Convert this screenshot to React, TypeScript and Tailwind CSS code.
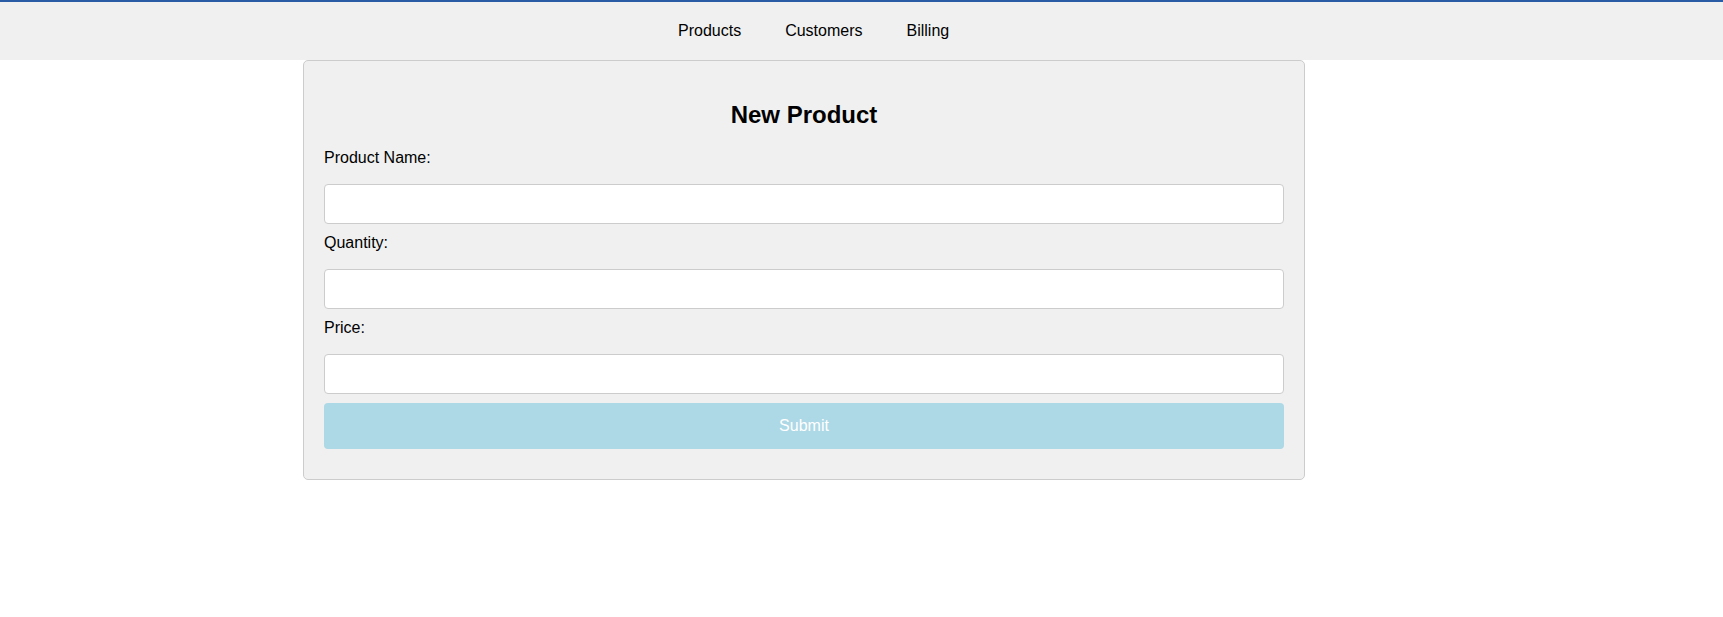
import React from "react";

export default function App() {
  const fields = ["Product Name:", "Quantity:", "Price:"];
  return (
    <div
      className="min-h-[617px] w-full bg-white text-black"
      style={{ fontFamily: '"Liberation Sans", Arial, sans-serif' }}
    >
      <nav className="h-[60px] border-t-2 border-[#2a5ca6] bg-[#f0f0f0]">
        <ul className="flex pl-[656px] pt-[20px]">
          {["Products", "Customers", "Billing"].map((t) => (
            <li key={t} className="px-[22px] text-[16px] leading-[18px]">
              {t}
            </li>
          ))}
        </ul>
      </nav>
      <div className="ml-[303px] w-[1002px] rounded-[5px] border border-[#cccccc] bg-[#f0f0f0] p-[20px]">
        <h2 className="mt-[20px] mb-[20px] text-center text-[24px] font-bold leading-[28px]">
          New Product
        </h2>
        <form className="flex flex-col">
          {fields.map((f) => (
            <div key={f} className="flex flex-col">
              <label className="block text-[16px] leading-[18px]">{f}</label>
              <input
                type="text"
                className="mt-[17px] mb-[10px] h-[40px] w-full rounded-[4px] border border-[#cccccc] bg-white px-[10px] text-[16px] outline-none"
              />
            </div>
          ))}
          <button
            type="button"
            className="mt-[-1px] mb-[10px] h-[46px] w-full rounded-[4px] bg-[#add8e6] text-[16px] text-white"
          >
            Submit
          </button>
        </form>
      </div>
    </div>
  );
}
